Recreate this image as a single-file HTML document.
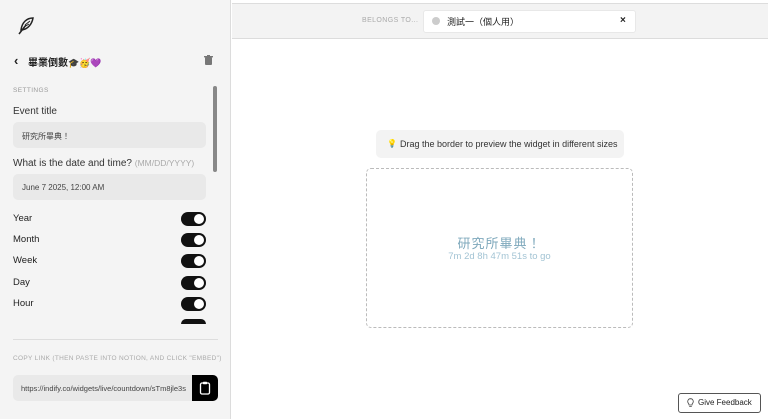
<!DOCTYPE html>
<html><head><meta charset="utf-8"><style>
*{box-sizing:border-box;margin:0;padding:0}
body{width:768px;height:419px;overflow:hidden;background:#fff;font-family:"Liberation Sans","Noto Sans CJK TC",sans-serif;position:relative;color:#222}
.side{position:absolute;left:0;top:0;width:231px;height:419px;background:#f4f4f4;border-right:1px solid #dcdcdc}
.abs{position:absolute}
.lbl{font-size:10px;color:#333}
.inp{position:absolute;left:13px;width:193px;height:26px;background:#e9e9e9;border-radius:5px;font-size:8px;color:#444;padding:9px 0 0 9px}
.row{position:absolute;left:13px;font-size:9.5px;color:#222}
.tg{position:absolute;left:181px;width:25px;height:14px;background:#111;border-radius:7px}
.tg::after{content:"";position:absolute;right:2px;top:2px;width:10px;height:10px;border-radius:50%;background:#fff}
.top{position:absolute;left:232px;top:3px;width:536px;height:36px;background:#f3f3f3;border-bottom:1px solid #dcdcdc;border-top:1px solid #ddd}
</style></head><body>
<div class="side">
  <svg class="abs" style="left:17px;top:16px" width="20" height="20" viewBox="0 0 20 20"><path d="M2 18 L9 9 M4 14 C5 6 10 2 16 2 C15 8 11 13 5 14 Z" fill="none" stroke="#222" stroke-width="1.5"/><path d="M8 9 L13 5 M7 11 L12 8" stroke="#222" stroke-width="1"/></svg>
  <div class="abs" style="left:14px;top:53px;font-size:13px;font-weight:bold">‹</div>
  <div class="abs" style="left:28px;top:54px;font-size:10px;font-weight:bold">畢業倒數<span style="font-size:9px">🎓🥳💜</span></div>
  <svg class="abs" style="left:204px;top:55px" width="9" height="10" viewBox="0 0 9 10"><rect x="1" y="2" width="7" height="8" rx="1" fill="#777"/><rect x="0" y="1" width="9" height="1.4" fill="#777"/><rect x="3" y="0" width="3" height="1.4" fill="#777"/></svg>
  <div class="abs" style="left:13px;top:87px;font-size:6.5px;color:#999;letter-spacing:.4px">SETTINGS</div>
  <div class="abs" style="left:213px;top:86px;width:4px;height:86px;background:#888;border-radius:2px"></div>
  <div class="abs lbl" style="left:13px;top:106px">Event title</div>
  <div class="inp" style="top:122px">研究所畢典！</div>
  <div class="abs lbl" style="left:13px;top:158px">What is the date and time? <span style="color:#aaa;font-size:8.5px">(MM/DD/YYYY)</span></div>
  <div class="inp" style="top:174px">June 7 2025, 12:00 AM</div>
  <div class="row" style="top:213px">Year</div><div class="tg" style="top:212px"></div>
  <div class="row" style="top:234px">Month</div><div class="tg" style="top:233px"></div>
  <div class="row" style="top:255px">Week</div><div class="tg" style="top:254px"></div>
  <div class="row" style="top:277px">Day</div><div class="tg" style="top:276px"></div>
  <div class="row" style="top:298px">Hour</div><div class="tg" style="top:297px"></div>
  <div class="abs" style="left:181px;top:319px;width:25px;height:5px;background:#111;border-radius:7px 7px 0 0"></div>
  <div class="abs" style="left:13px;top:339px;width:205px;height:1px;background:#ddd"></div>
  <div class="abs" style="left:13px;top:355px;font-size:6.5px;color:#aaa;letter-spacing:.3px">COPY LINK (THEN PASTE INTO NOTION, AND CLICK "EMBED")</div>
  <div class="abs" style="left:13px;top:375px;width:180px;height:26px;background:#e9e9e9;border-radius:5px 0 0 5px;font-size:7.5px;color:#444;padding:9px 0 0 8px;white-space:nowrap;overflow:hidden">https://indify.co/widgets/live/countdown/sTm8jle3s</div>
  <div class="abs" style="left:192px;top:375px;width:26px;height:26px;background:#000;border-radius:0 5px 5px 0"></div>
  <svg class="abs" style="left:199px;top:381px" width="12" height="14" viewBox="0 0 12 14"><rect x="1.5" y="2" width="9" height="11" rx="1.5" fill="none" stroke="#fff" stroke-width="1.3"/><rect x="4" y="0.8" width="4" height="2.4" rx=".6" fill="#fff"/></svg>
</div>
<div class="top">
  <div class="abs" style="left:130px;top:13px;font-size:7px;color:#aaa;letter-spacing:.4px">BELONGS TO...</div>
  <div class="abs" style="left:191px;top:6px;width:213px;height:23px;background:#fff;border-radius:3px;border:1px solid #e8e8e8"></div>
  <div class="abs" style="left:200px;top:13px;width:8px;height:8px;border-radius:50%;background:#ccc"></div>
  <div class="abs" style="left:215px;top:11px;font-size:9px;color:#222">測試一（個人用）</div>
  <div class="abs" style="left:388px;top:11px;font-size:10px;font-weight:bold;color:#222">×</div>
</div>
<div class="abs" style="left:376px;top:130px;width:248px;height:28px;background:#f3f3f3;border-radius:5px"></div>
<div class="abs" style="left:387px;top:139px;font-size:8px;color:#e8d27a">💡</div>
<div class="abs" style="left:400px;top:139px;font-size:9px;color:#333">Drag the border to preview the widget in different sizes</div>
<div class="abs" style="left:366px;top:168px;width:267px;height:160px;border:1px dashed #bbb;border-radius:5px"></div>
<div class="abs" style="left:366px;top:233px;width:267px;text-align:center;font-size:13px;color:#7fa9bc;letter-spacing:1px">研究所畢典！</div>
<div class="abs" style="left:366px;top:251px;width:267px;text-align:center;font-size:9.5px;color:#a3c4d4">7m 2d 8h 47m 51s to go</div>
<div class="abs" style="left:678px;top:393px;width:83px;height:20px;border:1px solid #555;border-radius:3px;background:#fff"></div>
<svg class="abs" style="left:687px;top:398px" width="7" height="10" viewBox="0 0 7 10"><path d="M3.5 0.7 A2.8 2.8 0 0 1 5.3 5.6 L5 7 H2 L1.7 5.6 A2.8 2.8 0 0 1 3.5 0.7 Z M2.2 8.5 H4.8" fill="none" stroke="#444" stroke-width=".8"/></svg>
<div class="abs" style="left:698px;top:398px;font-size:8px;color:#222">Give Feedback</div>
</body></html>
